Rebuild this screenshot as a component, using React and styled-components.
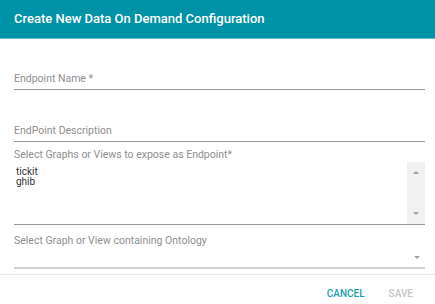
import styled, { createGlobalStyle } from 'styled-components';

const colors = {
  teal: '#0092a6',
  tealLine: '#5cb8c4',
  accent: '#1c9fb0',
  label: '#8f8f8f',
  text: '#333333',
  line: '#9a9a9a',
  lightLine: '#d2d2d2',
  divider: '#e6e6e6',
  disabled: '#c6c6c6',
};

const GlobalStyle = createGlobalStyle`
  html, body {
    margin: 0;
    padding: 0;
    background: #ffffff;
    font-family: Roboto, "Liberation Sans", Arial, sans-serif;
  }
`;

const Dialog = styled.div`
  width: 435px;
  height: 304px;
  display: flex;
  flex-direction: column;
  background: #fff;
  overflow: hidden;
`;

const Header = styled.div`
  height: 38px;
  display: flex;
  align-items: center;
  padding: 0 14px;
  background: ${colors.teal};
  border-bottom: 1px solid ${colors.tealLine};
`;

const Title = styled.h2`
  margin: 0;
  font-size: 13px;
  font-weight: 500;
  color: #fff;
  line-height: 16px;
`;

const Body = styled.div`
  padding: 0 10px 0 14px;
  display: flex;
  flex-direction: column;
`;

const Field = styled.div`
  margin-top: ${p => p.$top}px;
  padding-bottom: 3px;
  border-bottom: 1px solid ${colors.line};
`;

const Label = styled.div`
  font-size: 10.5px;
  line-height: 14px;
  color: ${colors.label};
`;

const Group = styled.div`
  margin-top: ${p => p.$top}px;
  display: flex;
  flex-direction: column;
`;

const ListBox = styled.div`
  height: 62px;
  display: flex;
  border-bottom: 1px solid ${colors.line};
`;

const Options = styled.div`
  flex: 1;
  padding: 5px 2px 0;
`;

const Option = styled.div`
  font-size: 10px;
  line-height: 10px;
  color: ${colors.text};
`;

const Scrollbar = styled.div`
  width: 18px;
  display: flex;
  flex-direction: column;
  justify-content: space-between;
  align-items: center;
  padding: 9px 0 9px;
  background: #f1f1f1;
`;

const Arrow = styled.div`
  width: 0;
  height: 0;
  border-left: 3px solid transparent;
  border-right: 3px solid transparent;
  ${p => (p.$down ? 'border-top' : 'border-bottom')}: 3px solid #a3a3a3;
`;

const SelectRow = styled.div`
  height: 19px;
  display: flex;
  align-items: center;
  justify-content: flex-end;
  padding-right: 5px;
  border-bottom: 2px solid ${colors.lightLine};
`;

const Footer = styled.div`
  margin-top: 5px;
  border-top: 1px solid ${colors.divider};
  padding: 9px 10px 0;
  display: flex;
  justify-content: flex-end;
`;

const Button = styled.button`
  border: none;
  background: none;
  padding: 0 12px;
  height: 20px;
  font-family: inherit;
  font-size: 10px;
  font-weight: 500;
  line-height: 20px;
  text-transform: uppercase;
  color: ${p => (p.disabled ? colors.disabled : colors.accent)};
  cursor: ${p => (p.disabled ? 'default' : 'pointer')};
`;

export default function App() {
  return (
    <>
      <GlobalStyle />
      <Dialog>
        <Header>
          <Title>Create New Data On Demand Configuration</Title>
        </Header>
        <Body>
          <Field $top={33}>
            <Label>Endpoint Name *</Label>
          </Field>
          <Field $top={34}>
            <Label>EndPoint Description</Label>
          </Field>
          <Group $top={6}>
            <Label>Select Graphs or Views to expose as Endpoint*</Label>
            <ListBox>
              <Options>
                <Option>tickit</Option>
                <Option>ghib</Option>
              </Options>
              <Scrollbar>
                <Arrow />
                <Arrow $down />
              </Scrollbar>
            </ListBox>
          </Group>
          <Group $top={9}>
            <Label>Select Graph or View containing Ontology</Label>
            <SelectRow>
              <Arrow $down />
            </SelectRow>
          </Group>
        </Body>
        <Footer>
          <Button type="button">Cancel</Button>
          <Button type="button" disabled>Save</Button>
        </Footer>
      </Dialog>
    </>
  );
}
